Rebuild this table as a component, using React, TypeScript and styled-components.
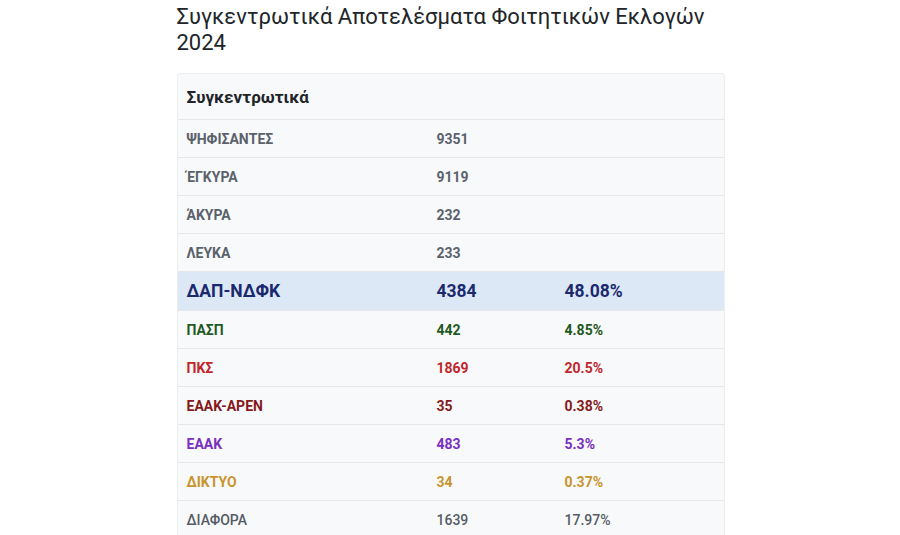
import React from "react";
import styled, { createGlobalStyle } from "styled-components";

const Global = createGlobalStyle`
  html, body { margin: 0; padding: 0; background: #ffffff; }
  body { font-family: Roboto, "Noto Sans", "Liberation Sans", sans-serif; color: #212529; }
`;

const Page = styled.div`
  width: 548px;
  margin: 0 auto;
  padding-top: 4px;
  padding-left: 1px;
`;

const Title = styled.h1`
  margin: 0 0 17px 0;
  font-size: 22px;
  line-height: 26px;
  font-weight: 400;
  color: #212529;
`;

const Card = styled.div`
  background: #f8f9fa;
  border: 1px solid #eceef0;
  border-bottom: none;
  border-radius: 3px 3px 0 0;
`;

const CardHeader = styled.div`
  height: 45px;
  display: flex;
  align-items: center;
  padding: 0 9px;
  font-size: 17px;
  font-weight: 700;
  color: #212529;
`;

const Row = styled.div<{ $color: string; $big?: boolean; $weight?: number }>`
  display: grid;
  grid-template-columns: 250px 128px 1fr;
  align-items: center;
  height: ${(p) => (p.$big ? "38px" : "37px")};
  padding-left: 9px;
  border-top: 1px solid #e5e7ea;
  background: ${(p) => (p.$big ? "#dde8f7" : "transparent")};
  color: ${(p) => p.$color};
  font-size: ${(p) => (p.$big ? "17.5px" : "14px")};
  font-weight: ${(p) => p.$weight ?? 700};
`;

const Cell = styled.span`
  white-space: nowrap;
`;

type R = { label: string; votes: number; pct?: string; color: string; big?: boolean; weight?: number };

const rows: R[] = [
  { label: "ΨΗΦΙΣΑΝΤΕΣ", votes: 9351, color: "#5b626b" },
  { label: "ΈΓΚΥΡΑ", votes: 9119, color: "#5b626b" },
  { label: "ΆΚΥΡΑ", votes: 232, color: "#5b626b" },
  { label: "ΛΕΥΚΑ", votes: 233, color: "#5b626b" },
  { label: "ΔΑΠ-ΝΔΦΚ", votes: 4384, pct: "48.08%", color: "#1b2a6e", big: true },
  { label: "ΠΑΣΠ", votes: 442, pct: "4.85%", color: "#1f5a22" },
  { label: "ΠΚΣ", votes: 1869, pct: "20.5%", color: "#c0272d" },
  { label: "ΕΑΑΚ-ΑΡΕΝ", votes: 35, pct: "0.38%", color: "#86191b" },
  { label: "ΕΑΑΚ", votes: 483, pct: "5.3%", color: "#7a2fc0" },
  { label: "ΔΙΚΤΥΟ", votes: 34, pct: "0.37%", color: "#c8942e" },
  { label: "ΔΙΑΦΟΡΑ", votes: 1639, pct: "17.97%", color: "#555c65", weight: 500 },
];

export default function App() {
  return (
    <>
      <Global />
      <Page>
        <Title>Συγκεντρωτικά Αποτελέσματα Φοιτητικών Εκλογών 2024</Title>
        <Card>
          <CardHeader>Συγκεντρωτικά</CardHeader>
          {rows.map((r) => (
            <Row key={r.label} $color={r.color} $big={r.big} $weight={r.weight}>
              <Cell>{r.label}</Cell>
              <Cell>{r.votes}</Cell>
              <Cell>{r.pct ?? ""}</Cell>
            </Row>
          ))}
        </Card>
      </Page>
    </>
  );
}
